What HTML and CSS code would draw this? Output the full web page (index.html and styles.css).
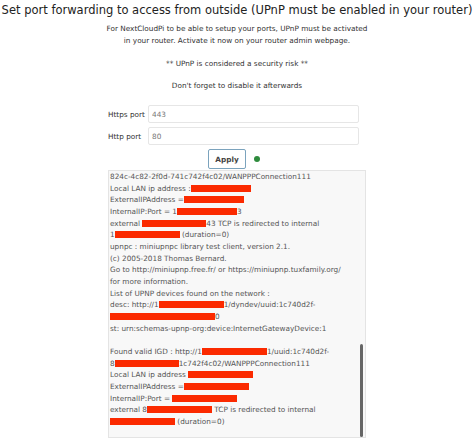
FILE: index.html
```html
<html>
<head>
    <title>Port forwarding</title>
    <meta charset="UTF-8"/>
    <link rel="stylesheet" href="styles.css">
</head>
<body>
<h1>Set port forwarding to access from outside (UPnP must be enabled in your router)</h1>
<div class="intro">
    <p>For NextCloudPi to be able to setup your ports, UPnP must be activated<br>in your router. Activate it now on your router admin webpage.</p>
    <p>** UPnP is considered a security risk **</p>
    <p>Don't forget to disable it afterwards</p>
</div>
<div class="form">
    <div class="row"><label for="https">Https port</label><input id="https" type="text" placeholder="443"/></div>
    <div class="row"><label for="http">Http port</label><input id="http" type="text" placeholder="80"/></div>
    <div class="actions">
        <button type="button">Apply</button>
        <span class="dot"></span>
    </div>
</div>
<div class="log">
    <div>824c-4c82-2f0d-741c742f4c02/WANPPPConnection111</div>
    <div>Local LAN ip address :<span class="red w60"></span></div>
    <div>ExternalIPAddress =<span class="red w60"></span></div>
    <div>InternalIP:Port = 1<span class="red w60"></span>3</div>
    <div>external <span class="red w64"></span>43 TCP is redirected to internal</div>
    <div>1<span class="red w65"></span> (duration=0)</div>
    <div>upnpc : miniupnpc library test client, version 2.1.</div>
    <div>(c) 2005-2018 Thomas Bernard.</div>
    <div>Go to http://miniupnp.free.fr/ or https://miniupnp.tuxfamily.org/</div>
    <div>for more information.</div>
    <div>List of UPNP devices found on the network :</div>
    <div>desc: http://1<span class="red w65"></span>1/dyndev/uuid:1c740d2f-</div>
    <div><span class="red w105"></span>0</div>
    <div>st: urn:schemas-upnp-org:device:InternetGatewayDevice:1</div>
    <div>&nbsp;</div>
    <div>Found valid IGD : http://1<span class="red w65"></span>1/uuid:1c740d2f-</div>
    <div>8<span class="red w64"></span>1c742f4c02/WANPPPConnection111</div>
    <div>Local LAN ip address <span class="red w65"></span></div>
    <div>ExternalIPAddress =<span class="red w65"></span></div>
    <div>InternalIP:Port = <span class="red w65"></span></div>
    <div>external 8<span class="red w65"></span> TCP is redirected to internal</div>
    <div><span class="red w65"></span> (duration=0)</div>
    <div class="thumb"></div>
</div>
</body>
</html>
```

FILE: styles.css
```css
html, body {
    margin: 0px;
    background: #fff;
    color: #333;
    font-family: "DejaVu Sans", sans-serif;
}

* {
    box-sizing: border-box;
}

h1 {
    font-size: 11.5px;
    font-weight: normal;
    color: #222;
    text-align: center;
    white-space: nowrap;
    margin: 0px;
    padding-top: 2px;
    line-height: 16px;
}

.intro {
    margin-top: 5px;
    font-size: 7.3px;
    line-height: 12px;
    text-align: center;
    color: #333;
}

.intro p {
    margin: 0px 0px 10.5px 0px;
}

.form {
    width: 252px;
    margin: 13px 0px 0px 108px;
}

.row {
    display: flex;
    align-items: center;
    height: 18px;
    margin-bottom: 4px;
}

.row label {
    width: 40px;
    font-size: 7.3px;
    color: #333;
}

.row input {
    width: 211px;
    height: 18px;
    border: 1px solid #e6e6e6;
    border-radius: 2px;
    padding: 0px 3px;
    font-family: inherit;
    font-size: 7.3px;
    outline: 0px;
}

.row input::placeholder {
    color: #777;
}

.actions {
    display: flex;
    align-items: center;
    margin-left: 100px;
    height: 20px;
}

button {
    width: 38px;
    height: 20px;
    padding: 0px;
    background: #fff;
    border: 1px solid #7ba3bd;
    border-radius: 2px;
    color: #444;
    font-family: inherit;
    font-size: 7.3px;
    font-weight: bold;
}

.dot {
    width: 6px;
    height: 6px;
    margin-left: 8px;
    border-radius: 6px;
    background: #2e8b3d;
}

.log {
    position: relative;
    width: 258px;
    height: 268px;
    margin: 1px 0px 0px 108px;
    padding: 0px 1px;
    overflow: hidden;
    background: #f8f8f8;
    border: 1px solid #e4e4e4;
    font-size: 7.3px;
    line-height: 11.67px;
    color: #555;
    white-space: nowrap;
}

.red {
    display: inline-block;
    height: 7px;
    vertical-align: -1px;
    background: #fb2a00;
}

.w60 {
    width: 60px;
}

.w64 {
    width: 64px;
}

.w65 {
    width: 65px;
}

.w105 {
    width: 105px;
}

.thumb {
    position: absolute;
    right: 2px;
    top: 173px;
    width: 3px;
    height: 93px;
    border-radius: 2px;
    background: #666;
}
```
